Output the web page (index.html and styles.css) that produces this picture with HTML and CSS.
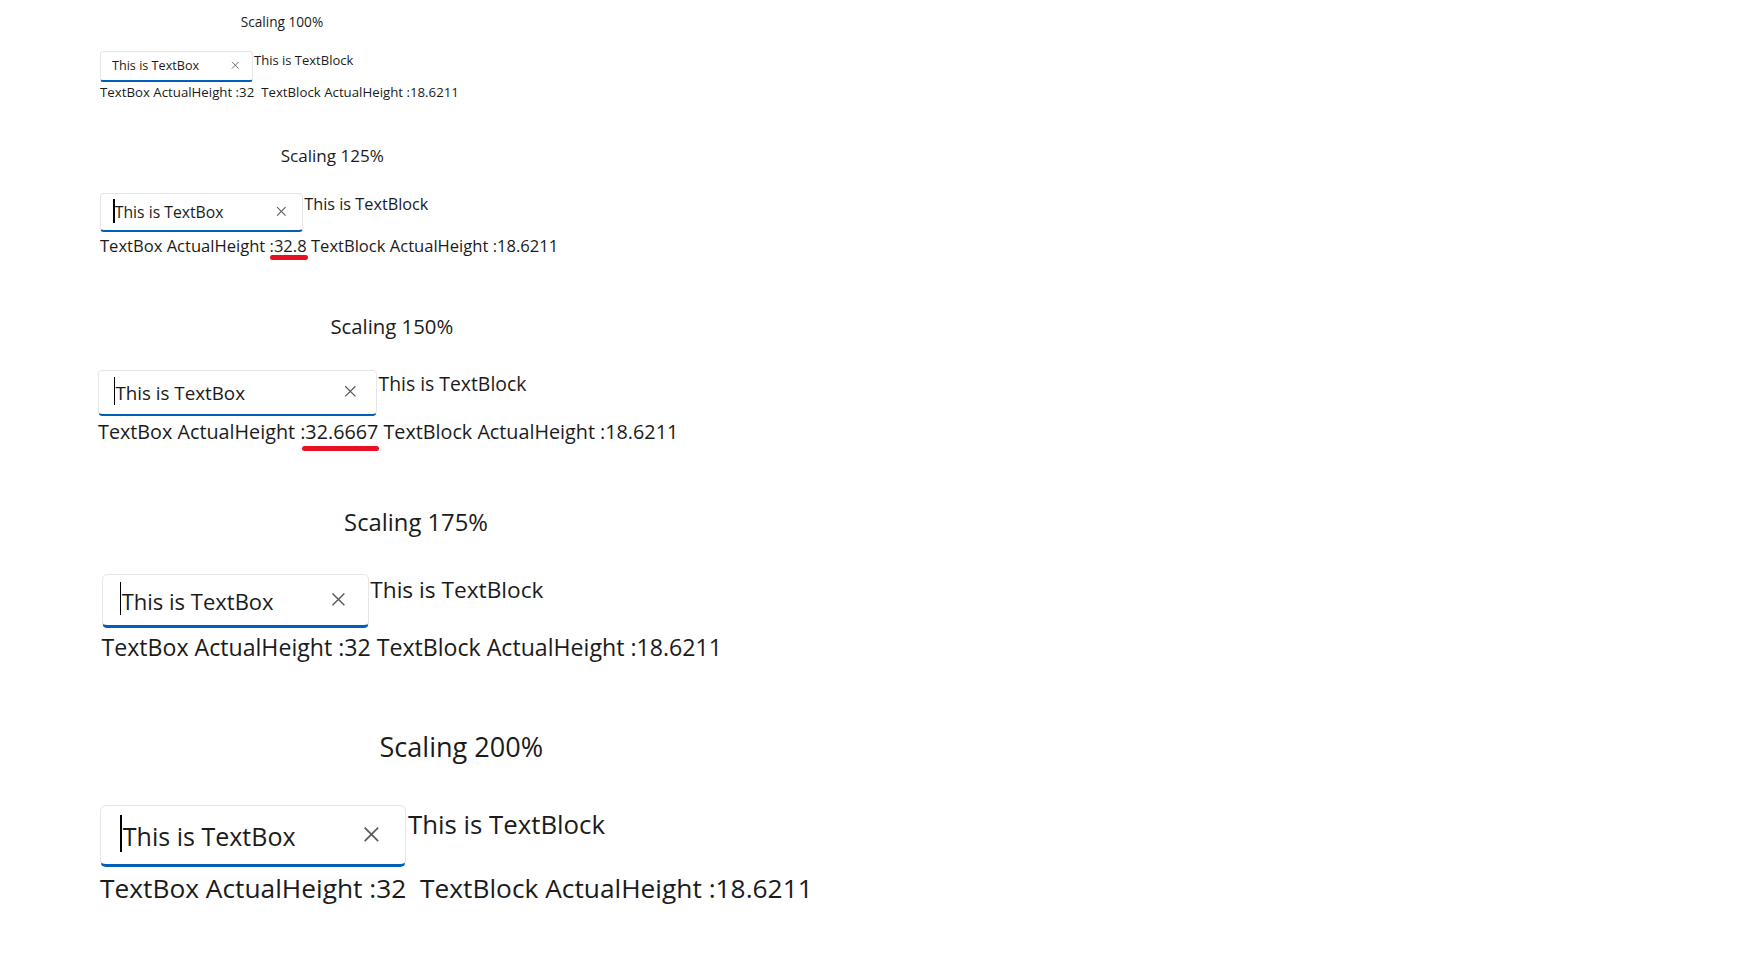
FILE: index.html
```html
<!DOCTYPE html>
<html lang="en">
<head>
  <meta charset="UTF-8">
  <meta name="viewport" content="width=device-width, initial-scale=1.0">
  <title>TextBox ActualHeight at different scalings</title>
  <link rel="stylesheet" href="styles.css">
</head>
<body>

  <main class="page">

    <section class="demo scale-100">
      <h2 class="caption">Scaling 100%</h2>
      <div class="row">
        <div class="textbox">
          <span class="textbox-value">This is TextBox</span>
          <svg class="textbox-clear" viewBox="0 0 10 10"><path d="M1 1L9 9M9 1L1 9"/></svg>
        </div>
        <span class="textblock">This is TextBlock</span>
      </div>
      <p class="heights">TextBox ActualHeight :32&nbsp; TextBlock ActualHeight :18.6211</p>
    </section>

    <section class="demo scale-125">
      <h2 class="caption">Scaling 125%</h2>
      <div class="row">
        <div class="textbox focused">
          <span class="textbox-value">This is TextBox</span>
          <svg class="textbox-clear" viewBox="0 0 10 10"><path d="M1 1L9 9M9 1L1 9"/></svg>
        </div>
        <span class="textblock">This is TextBlock</span>
      </div>
      <p class="heights">TextBox ActualHeight :<span class="mark">32.8</span> TextBlock ActualHeight :18.6211</p>
    </section>

    <section class="demo scale-150">
      <h2 class="caption">Scaling 150%</h2>
      <div class="row">
        <div class="textbox focused">
          <span class="textbox-value">This is TextBox</span>
          <svg class="textbox-clear" viewBox="0 0 10 10"><path d="M1 1L9 9M9 1L1 9"/></svg>
        </div>
        <span class="textblock">This is TextBlock</span>
      </div>
      <p class="heights">TextBox ActualHeight :<span class="mark">32.6667</span> TextBlock ActualHeight :18.6211</p>
    </section>

    <section class="demo scale-175">
      <h2 class="caption">Scaling 175%</h2>
      <div class="row">
        <div class="textbox focused">
          <span class="textbox-value">This is TextBox</span>
          <svg class="textbox-clear" viewBox="0 0 10 10"><path d="M1 1L9 9M9 1L1 9"/></svg>
        </div>
        <span class="textblock">This is TextBlock</span>
      </div>
      <p class="heights">TextBox ActualHeight :32 TextBlock ActualHeight :18.6211</p>
    </section>

    <section class="demo scale-200">
      <h2 class="caption">Scaling 200%</h2>
      <div class="row">
        <div class="textbox focused">
          <span class="textbox-value">This is TextBox</span>
          <svg class="textbox-clear" viewBox="0 0 10 10"><path d="M1 1L9 9M9 1L1 9"/></svg>
        </div>
        <span class="textblock">This is TextBlock</span>
      </div>
      <p class="heights">TextBox ActualHeight :32&nbsp; TextBlock ActualHeight :18.6211</p>
    </section>

  </main>

</body>
</html>
```

FILE: styles.css
```css
body {
  margin: 0;
  padding: 0;
  font-family: 'Open Sans', 'Noto Sans', sans-serif;
  background-color: #fff;
  color: #1b1b1b;
}

.page {
  display: flex;
  flex-direction: column;
  align-items: flex-start;
  padding-left: 100px;
}

/* every block is the same control, drawn at a different display scale */
.demo {
  --s: 1;
  --tb-width: 153px;
  display: flex;
  flex-direction: column;
  align-items: flex-start;
  width: fit-content;
  font-size: calc(13px * var(--s));
  line-height: 1.42;
}

.scale-100 { --s: 1;     --tb-width: 153px; margin-top: 11px; }
.scale-125 { --s: 1.25;  --tb-width: 203px; margin-top: 41.2px; }
.scale-150 { --s: 1.49;  --tb-width: 279px; margin-top: 53.4px; margin-left: -2px; }
.scale-175 { --s: 1.745; --tb-width: 267px; margin-top: 58.5px; margin-left: 1.5px; }
.scale-200 { --s: 1.985; --tb-width: 306px; margin-top: 62.8px; }

.caption {
  align-self: stretch;
  margin: 0;
  padding-top: calc(0.9px * var(--s));
  padding-left: calc(5px * var(--s));
  font-size: 1.05em;
  font-weight: normal;
  text-align: center;
  white-space: nowrap;
}

.row {
  display: flex;
  align-items: flex-start;
  margin-top: calc(19.3px * var(--s));
}

.textbox {
  display: flex;
  align-items: center;
  box-sizing: border-box;
  width: var(--tb-width);
  height: calc(31px * var(--s));
  padding: calc(1.6px * var(--s)) calc(12.7px * var(--s)) 0 calc(11px * var(--s));
  border: calc(1px * var(--s)) solid #e6e6e6;
  border-bottom: calc(2px * var(--s)) solid #005fb8;
  border-radius: calc(3px * var(--s));
  background-color: #fff;
}

.textbox-value {
  position: relative;
  font-size: 0.97em;
  white-space: nowrap;
}

.textbox.focused .textbox-value::before {
  content: "";
  position: absolute;
  left: calc(-1.2px * var(--s));
  top: calc(-1.85px * var(--s));
  width: max(1px, calc(1px * var(--s)));
  height: calc(18.7px * var(--s));
  background-color: #000;
}

.textbox-clear {
  flex: none;
  width: calc(8.5px * var(--s));
  height: calc(8.5px * var(--s));
  margin-left: auto;
  margin-top: calc(-2.3px * var(--s));
  fill: none;
  stroke: #5c5c5c;
  stroke-width: 1;
}

.textblock {
  margin-top: calc(0.4px * var(--s));
  margin-left: calc(1px * var(--s));
  white-space: nowrap;
}

.heights {
  margin: calc(1.7px * var(--s)) 0 0;
  font-size: 1.02em;
  white-space: nowrap;
}

/* red marker under the odd values */
.mark {
  position: relative;
}

.mark::after {
  content: "";
  position: absolute;
  left: -3.5px;
  right: -1px;
  top: calc(100% - 1.6px);
  height: 5px;
  border-radius: 3px;
  background-color: #e81123;
}

.scale-150 .mark::after {
  top: calc(100% + 0.8px);
  height: 4.5px;
}
```
